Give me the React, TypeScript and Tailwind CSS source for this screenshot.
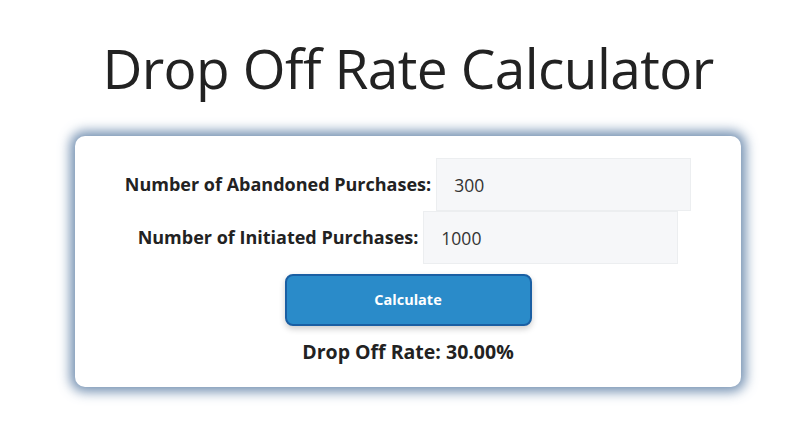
import React, { useState } from "react";

export default function App() {
  const [a, setA] = useState("300");
  const [b, setB] = useState("1000");
  const [rate, setRate] = useState("30.00");
  const calc = () => {
    const x = parseFloat(a);
    const y = parseFloat(b);
    if (y > 0) setRate(((x / y) * 100).toFixed(2));
  };
  return (
    <div className="w-[807px] h-[448px] bg-white flex flex-col items-center pl-[9px] text-[#222]" style={{ fontFamily: '"Open Sans", "Noto Sans", sans-serif' }}>
      <h1 className="mt-[30px] text-[55px] leading-[76px] font-normal tracking-[-0.6px]">Drop Off Rate Calculator</h1>
      <div className="mt-[30px] w-[666px] h-[251px] bg-white rounded-[10px] shadow-[0_0_12px_5px_rgba(85,120,160,0.8)] flex flex-col items-center pt-[22px]">
        <div className="flex items-center gap-[5px]">
          <label className="text-[18px] font-bold text-[#222]">Number of Abandoned Purchases:</label>
          <input value={a} onChange={(e) => setA(e.target.value)} className="w-[255px] h-[53px] bg-[#f6f7f9] border border-[#eceef0] px-[17px] text-[17.5px] text-[#333] outline-none" />
        </div>
        <div className="flex items-center gap-[5px]">
          <label className="text-[18px] font-bold text-[#222]">Number of Initiated Purchases:</label>
          <input value={b} onChange={(e) => setB(e.target.value)} className="w-[255px] h-[53px] bg-[#f6f7f9] border border-[#eceef0] px-[17px] text-[17.5px] text-[#333] outline-none" />
        </div>
        <button onClick={calc} className="mt-[10px] w-[247px] h-[52px] bg-[#2a8bc9] border-2 border-[#1a5fa3] rounded-[8px] text-white font-bold text-[14.5px] shadow-[0_3px_6px_rgba(0,0,0,0.2)]">Calculate</button>
        <div className="mt-[12px] text-[19.5px] leading-[28px] font-bold text-[#222]">Drop Off Rate: {rate}%</div>
      </div>
    </div>
  );
}
